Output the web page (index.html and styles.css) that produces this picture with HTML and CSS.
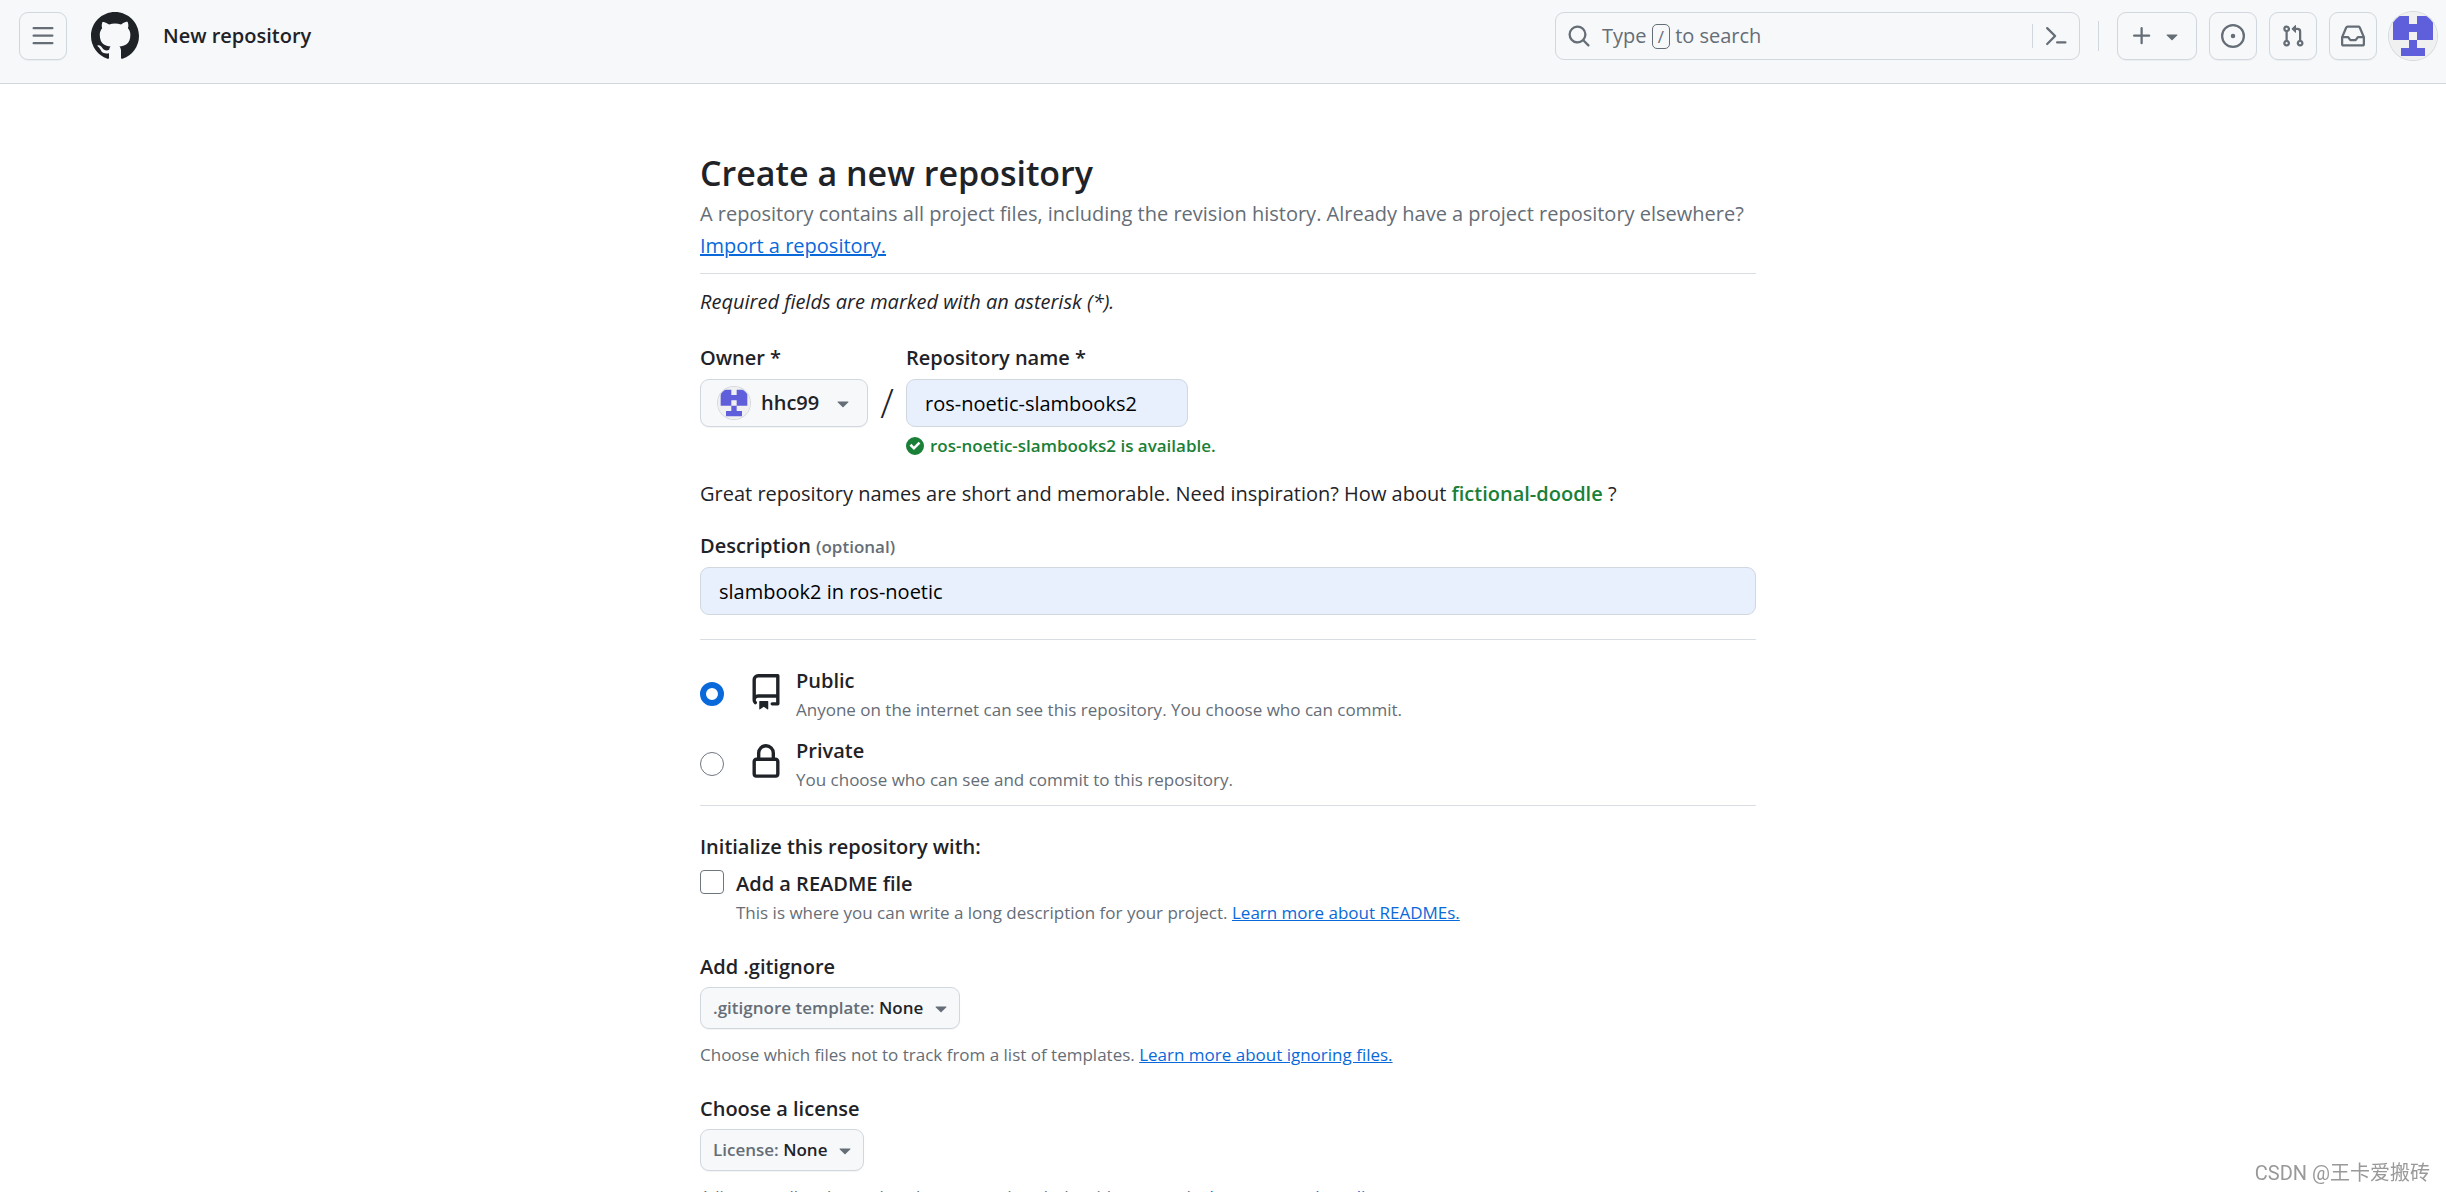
FILE: index.html
```html
<!DOCTYPE html>
<html lang="en">
<head>
<meta charset="utf-8">
<meta name="viewport" content="width=device-width, initial-scale=1">
<title>New repository</title>
<link rel="stylesheet" href="styles.css">
</head>
<body>
<svg class="sprite" aria-hidden="true">
  <symbol id="identicon" viewBox="0 0 48 48">
    <rect width="48" height="48" fill="#f0f0f0"/>
    <path fill="#5f5fdb" d="M4 4h16v8h8V4h16v24H28v8h8v8H12v-8h8v-8H4zM20 20v8h8v-8z" fill-rule="evenodd"/>
  </symbol>
  <symbol id="caret" viewBox="0 0 16 16">
    <path d="m4.427 7.427 3.396 3.396a.25.25 0 0 0 .354 0l3.396-3.396A.25.25 0 0 0 11.396 7H4.604a.25.25 0 0 0-.177.427Z"/>
  </symbol>
</svg>
<div class="page">
  <header class="topbar">
    <button class="icon-button" type="button" aria-label="Open menu">
      <svg class="icon" viewBox="0 0 16 16"><path d="M1 2.75A.75.75 0 0 1 1.75 2h12.5a.75.75 0 0 1 0 1.5H1.75A.75.75 0 0 1 1 2.75Zm0 5A.75.75 0 0 1 1.75 7h12.5a.75.75 0 0 1 0 1.5H1.75A.75.75 0 0 1 1 7.75ZM1.75 12h12.5a.75.75 0 0 1 0 1.5H1.75a.75.75 0 0 1 0-1.5Z"/></svg>
    </button>
    <a class="logo" href="#" aria-label="Homepage">
      <svg viewBox="0 0 16 16"><path d="M8 0c4.42 0 8 3.58 8 8a8.013 8.013 0 0 1-5.45 7.59c-.4.08-.55-.17-.55-.38 0-.27.01-1.13.01-2.2 0-.75-.25-1.23-.54-1.48 1.78-.2 3.65-.88 3.65-3.95 0-.88-.31-1.59-.82-2.15.08-.2.36-1.02-.08-2.12 0 0-.67-.22-2.2.82-.64-.18-1.32-.27-2-.27-.68 0-1.36.09-2 .27-1.53-1.03-2.2-.82-2.2-.82-.44 1.1-.16 1.92-.08 2.12-.51.56-.82 1.28-.82 2.15 0 3.06 1.86 3.75 3.64 3.95-.23.2-.44.55-.51 1.07-.46.21-1.61.55-2.33-.66-.15-.24-.6-.83-1.23-.82-.67.01-.27.38.01.53.34.19.73.9.82 1.13.16.45.68 1.31 2.69.94 0 .67.01 1.3.01 1.49 0 .21-.15.45-.55.38A7.995 7.995 0 0 1 0 8c0-4.42 3.58-8 8-8Z"/></svg>
    </a>
    <a class="context" href="#">New repository</a>
    <div class="search">
      <button class="search-field" type="button">
        <svg class="icon" viewBox="0 0 16 16"><path d="M10.68 11.74a6 6 0 0 1-7.922-8.982 6 6 0 0 1 8.982 7.922l3.04 3.04a.749.749 0 0 1-.326 1.275.749.749 0 0 1-.734-.215ZM11.5 7a4.499 4.499 0 1 0-8.997 0A4.499 4.499 0 0 0 11.5 7Z"/></svg>
        <span>Type <kbd>/</kbd> to search</span>
      </button>
      <button class="palette" type="button" aria-label="Command palette">
        <svg class="icon" viewBox="0 0 16 16"><path d="m6.354 8.04-4.773 4.773a.75.75 0 1 0 1.061 1.06L7.945 8.57a.75.75 0 0 0 0-1.06L2.642 2.206a.75.75 0 0 0-1.06 1.061L6.353 8.04ZM8.75 11.5a.75.75 0 0 0 0 1.5h5.5a.75.75 0 0 0 0-1.5h-5.5Z"/></svg>
      </button>
    </div>
    <span class="divider"></span>
    <nav class="actions">
      <button class="icon-button create" type="button" aria-label="Create new">
        <svg class="icon" viewBox="0 0 16 16"><path d="M7.75 2a.75.75 0 0 1 .75.75V7h4.25a.75.75 0 0 1 0 1.5H8.5v4.25a.75.75 0 0 1-1.5 0V8.5H2.75a.75.75 0 0 1 0-1.5H7V2.75A.75.75 0 0 1 7.75 2Z"/></svg>
        <svg class="icon"><use href="#caret"/></svg>
      </button>
      <button class="icon-button" type="button" aria-label="Issues">
        <svg class="icon" viewBox="0 0 16 16"><path d="M8 9.5a1.5 1.5 0 1 0 0-3 1.5 1.5 0 0 0 0 3Z"/><path d="M8 0a8 8 0 1 1 0 16A8 8 0 0 1 8 0ZM1.5 8a6.5 6.5 0 1 0 13 0 6.5 6.5 0 0 0-13 0Z"/></svg>
      </button>
      <button class="icon-button" type="button" aria-label="Pull requests">
        <svg class="icon" viewBox="0 0 16 16"><path d="M1.5 3.25a2.25 2.25 0 1 1 3 2.122v5.256a2.251 2.251 0 1 1-1.5 0V5.372A2.25 2.25 0 0 1 1.5 3.25Zm5.677-.177L9.573.677A.25.25 0 0 1 10 .854V2.5h1A2.5 2.5 0 0 1 13.5 5v5.628a2.251 2.251 0 1 1-1.5 0V5a1 1 0 0 0-1-1h-1v1.646a.25.25 0 0 1-.427.177L7.177 3.427a.25.25 0 0 1 0-.354ZM3.75 2.5a.75.75 0 1 0 0 1.5.75.75 0 0 0 0-1.5Zm0 9.5a.75.75 0 1 0 0 1.5.75.75 0 0 0 0-1.5Zm8.25.75a.75.75 0 1 0 1.5 0 .75.75 0 0 0-1.5 0Z"/></svg>
      </button>
      <button class="icon-button" type="button" aria-label="Notifications">
        <svg class="icon" viewBox="0 0 16 16"><path d="M2.8 2.06A1.75 1.75 0 0 1 4.41 1h7.18c.7 0 1.333.417 1.61 1.06l2.74 6.395c.04.093.06.194.06.295v4.5A1.75 1.75 0 0 1 14.25 15H1.75A1.75 1.75 0 0 1 0 13.25v-4.5c0-.101.02-.202.06-.295Zm1.61.44a.25.25 0 0 0-.23.152L1.887 8H4.75a.75.75 0 0 1 .6.3L6.625 10h2.75l1.275-1.7a.75.75 0 0 1 .6-.3h2.863L11.82 2.652a.25.25 0 0 0-.23-.152Zm10.09 7h-2.875l-1.275 1.7a.75.75 0 0 1-.6.3h-3.5a.75.75 0 0 1-.6-.3L4.375 9.5H1.5v3.75c0 .138.112.25.25.25h12.5a.25.25 0 0 0 .25-.25Z"/></svg>
      </button>
      <button class="account" type="button" aria-label="Account">
        <svg class="avatar"><use href="#identicon"/></svg>
      </button>
    </nav>
  </header>

  <main class="content">
    <form class="form">
      <div class="intro">
        <h1>Create a new repository</h1>
        <p>A repository contains all project files, including the revision history. Already have a project repository elsewhere? <a href="#">Import a repository.</a></p>
      </div>
      <p class="required">Required fields are marked with an asterisk (*).</p>

      <div class="name-row">
        <div class="field">
          <label for="owner">Owner *</label>
          <button class="owner" id="owner" type="button" aria-haspopup="listbox">
            <svg class="avatar avatar-small"><use href="#identicon"/></svg>
            <span>hhc99</span>
            <svg class="icon"><use href="#caret"/></svg>
          </button>
        </div>
        <span class="slash">/</span>
        <div class="field">
          <label for="name">Repository name *</label>
          <input class="text name" id="name" type="text" value="ros-noetic-slambooks2">
          <p class="available">
            <svg viewBox="0 0 12 12"><path fill-rule="evenodd" d="M6 0a6 6 0 1 1 0 12A6 6 0 0 1 6 0Zm-.705 8.737L9.63 4.403 8.392 3.166 5.295 6.263l-1.7-1.702L2.356 5.8l2.938 2.938Z"/></svg>
            <span>ros-noetic-slambooks2 is available.</span>
          </p>
        </div>
      </div>
      <p class="hint">Great repository names are short and memorable. Need inspiration? How about <button class="suggestion" type="button">fictional-doodle</button> ?</p>

      <div class="field description">
        <label for="description">Description <small>(optional)</small></label>
        <input class="text" id="description" type="text" value="slambook2 in ros-noetic">
      </div>

      <div class="section visibility">
        <div class="choice">
          <input type="radio" name="visibility" id="public" checked>
          <svg class="choice-icon" viewBox="0 0 16 16"><path d="M2 2.5A2.5 2.5 0 0 1 4.5 0h8.75a.75.75 0 0 1 .75.75v12.5a.75.75 0 0 1-.75.75h-2.5a.75.75 0 0 1 0-1.5h1.75v-2h-8a1 1 0 0 0-.714 1.7.75.75 0 1 1-1.072 1.05A2.495 2.495 0 0 1 2 11.5Zm10.5-1h-8a1 1 0 0 0-1 1v6.708A2.486 2.486 0 0 1 4.5 9h8ZM5 12.25a.25.25 0 0 1 .25-.25h3.5a.25.25 0 0 1 .25.25v3.25a.25.25 0 0 1-.4.2l-1.45-1.087a.249.249 0 0 0-.3 0L5.4 15.7a.25.25 0 0 1-.4-.2Z"/></svg>
          <div>
            <label for="public">Public</label>
            <p class="note">Anyone on the internet can see this repository. You choose who can commit.</p>
          </div>
        </div>
        <div class="choice">
          <input type="radio" name="visibility" id="private">
          <svg class="choice-icon" viewBox="0 0 16 16"><path d="M4 4a4 4 0 0 1 8 0v2h.25c.966 0 1.75.784 1.75 1.75v5.5A1.75 1.75 0 0 1 12.25 15h-8.5A1.75 1.75 0 0 1 2 13.25v-5.5C2 6.784 2.784 6 3.75 6H4Zm8.25 3.5h-8.5a.25.25 0 0 0-.25.25v5.5c0 .138.112.25.25.25h8.5a.25.25 0 0 0 .25-.25v-5.5a.25.25 0 0 0-.25-.25ZM10.5 6V4a2.5 2.5 0 1 0-5 0v2Z"/></svg>
          <div>
            <label for="private">Private</label>
            <p class="note">You choose who can see and commit to this repository.</p>
          </div>
        </div>
      </div>

      <div class="section">
        <h2>Initialize this repository with:</h2>
        <div class="check">
          <input type="checkbox" id="readme">
          <div>
            <label for="readme">Add a README file</label>
            <p class="note">This is where you can write a long description for your project. <a href="#">Learn more about READMEs.</a></p>
          </div>
        </div>
      </div>

      <div class="template">
        <h2>Add .gitignore</h2>
        <button class="menu-button" type="button" aria-haspopup="listbox"><span>.gitignore template: <b>None</b></span><svg class="icon"><use href="#caret"/></svg></button>
        <p class="note">Choose which files not to track from a list of templates. <a href="#">Learn more about ignoring files.</a></p>
      </div>
      <div class="template">
        <h2>Choose a license</h2>
        <button class="menu-button" type="button" aria-haspopup="listbox"><span>License: <b>None</b></span><svg class="icon"><use href="#caret"/></svg></button>
        <p class="note">A license tells others what they can and can't do with your code. <a href="#">Learn more about licenses.</a></p>
      </div>
    </form>
  </main>
  <div class="watermark">CSDN @王卡爱搬砖</div>
</div>
</body>
</html>
```
FILE: styles.css
```css
:root {
  --fg: #1f2328;
  --muted: #656d76;
  --border: #d0d7de;
  --subtle: #f6f8fa;
  --accent: #0969da;
  --success: #1a7f37;
}

* {
  box-sizing: border-box;
}

body,
h1,
h2,
p {
  margin: 0;
}

body {
  background: #fff;
  color: var(--fg);
  font-family: "Open Sans", "Noto Sans", "Noto Sans CJK SC", sans-serif;
  font-size: 20px;
  line-height: 32px;
}

button,
input {
  margin: 0;
  font: inherit;
  color: inherit;
}

button {
  padding: 0;
  border: 0;
  background: none;
  cursor: pointer;
}

svg {
  display: block;
  flex: none;
  fill: currentColor;
}

a {
  color: var(--accent);
}

.sprite {
  display: none;
}

.page {
  height: 100vh;
  overflow: hidden;
}

.icon {
  width: 24px;
  height: 24px;
}

.avatar {
  width: 48px;
  height: 48px;
  border-radius: 50%;
  box-shadow: 0 0 0 1px #d5d8dc;
}

.avatar-small {
  width: 32px;
  height: 32px;
}

/* Top bar */

.topbar {
  display: flex;
  align-items: center;
  padding: 12px 9px 23px 19px;
  border-bottom: 1px solid var(--border);
  background: var(--subtle);
}

.icon-button {
  display: flex;
  align-items: center;
  justify-content: center;
  width: 48px;
  height: 48px;
  border: 1px solid var(--border);
  border-radius: 9px;
  box-shadow: 0 1px 1px rgba(31, 35, 40, 0.05);
  color: var(--muted);
}

.logo {
  margin: 0 24px;
  color: var(--fg);
}

.logo svg {
  width: 48px;
  height: 48px;
}

.context {
  font-weight: 600;
  color: var(--fg);
  text-decoration: none;
}

.search {
  display: flex;
  align-items: center;
  flex: 0 1 525px;
  height: 48px;
  margin-left: auto;
  border: 1px solid var(--border);
  border-radius: 9px;
  color: var(--muted);
}

.search-field {
  display: flex;
  align-items: center;
  flex: 1;
  gap: 11px;
  padding-left: 11px;
}

.search kbd {
  padding: 0 5px;
  border: 1px solid var(--muted);
  border-radius: 5px;
  font: 17px/22px "Open Sans", sans-serif;
}

.palette {
  padding: 0 11px;
  border-left: 1px solid var(--border);
}

.divider {
  width: 1px;
  height: 30px;
  margin: 0 18px;
  background: var(--border);
}

.actions {
  display: flex;
  gap: 12px;
}

.create {
  gap: 6px;
  width: 80px;
}

/* Form */

.content {
  padding: 64px 24px 24px 34px;
}

.form {
  max-width: 1056px;
  margin: 0 auto;
}

h1 {
  font-size: 34px;
  font-weight: 600;
  line-height: 50px;
}

h2 {
  font-size: 20px;
  font-weight: 600;
  line-height: 31px;
}

label {
  display: block;
  font-weight: 600;
}

.intro {
  padding-bottom: 11px;
  border-bottom: 1px solid #d8dee4;
  color: var(--muted);
}

.intro h1 {
  color: var(--fg);
}

.required {
  margin-top: 12px;
  font-style: italic;
}

.name-row {
  display: flex;
  align-items: flex-start;
  margin-top: 24px;
}

.field {
  display: grid;
  gap: 5px;
}

.text {
  width: 100%;
  height: 48px;
  padding: 0 18px;
  border: 1px solid var(--border);
  border-radius: 9px;
  background: #e8f0fe;
  color: #000;
}

.name {
  width: 282px;
}

.owner {
  display: flex;
  align-items: center;
  width: 168px;
  height: 48px;
  padding: 0 12px 0 17px;
  border: 1px solid var(--border);
  border-radius: 9px;
  background: var(--subtle);
  box-shadow: 0 1px 1px rgba(31, 35, 40, 0.05);
  font-weight: 600;
}

.owner span {
  margin: 0 auto 0 11px;
}

.owner .icon,
.menu-button .icon {
  color: var(--muted);
}

.slash {
  width: 38px;
  padding-top: 37px;
  font-size: 40px;
  font-weight: 300;
  line-height: 48px;
  text-align: center;
}

.available {
  display: flex;
  align-items: center;
  gap: 6px;
  color: var(--success);
  font-size: 17px;
  font-weight: 600;
  line-height: 27px;
}

.available svg {
  width: 18px;
  height: 18px;
}

.hint {
  margin-top: 19px;
}

.suggestion {
  color: var(--success);
  font-weight: 600;
}

.description {
  margin-top: 20px;
}

.description small {
  color: var(--muted);
  font-size: 17px;
  line-height: 20px;
}

.section {
  margin-top: 12px;
  padding-top: 25px;
  border-top: 1px solid #d8dee4;
}

.visibility {
  margin-top: 24px;
}

.note {
  color: var(--muted);
  font-size: 17px;
  line-height: 27px;
}

.choice {
  display: grid;
  grid-template-columns: 24px 36px 1fr;
  column-gap: 24px;
  align-items: center;
}

.choice + .choice {
  margin-top: 12px;
}

.choice > div {
  margin-left: -12px;
}

.choice label,
.check label {
  line-height: 31px;
}

.choice-icon {
  align-self: start;
  width: 36px;
  height: 36px;
  margin-top: 9px;
}

input[type="radio"],
input[type="checkbox"] {
  appearance: none;
  width: 24px;
  height: 24px;
  border: 1px solid #6e7781;
  border-radius: 50%;
  background: #fff;
}

input[type="radio"]:checked {
  border: 6px solid var(--accent);
}

input[type="checkbox"] {
  margin-top: 2px;
  border-radius: 4px;
}

.check {
  display: flex;
  gap: 12px;
  margin-top: 6px;
}

.template {
  margin-top: 25px;
}

.menu-button {
  display: flex;
  align-items: center;
  gap: 6px;
  height: 42px;
  margin: 5px 0 12px;
  padding: 0 6px 0 12px;
  border: 1px solid var(--border);
  border-radius: 9px;
  background: var(--subtle);
  box-shadow: 0 1px 1px rgba(31, 35, 40, 0.05);
  color: var(--muted);
  font-size: 17px;
  font-weight: 600;
}

.menu-button b {
  color: var(--fg);
  font-weight: 600;
}

.watermark {
  position: fixed;
  right: 16px;
  bottom: 4px;
  color: #999;
  font: 20px/30px Roboto, "Noto Sans CJK SC", sans-serif;
}
```
